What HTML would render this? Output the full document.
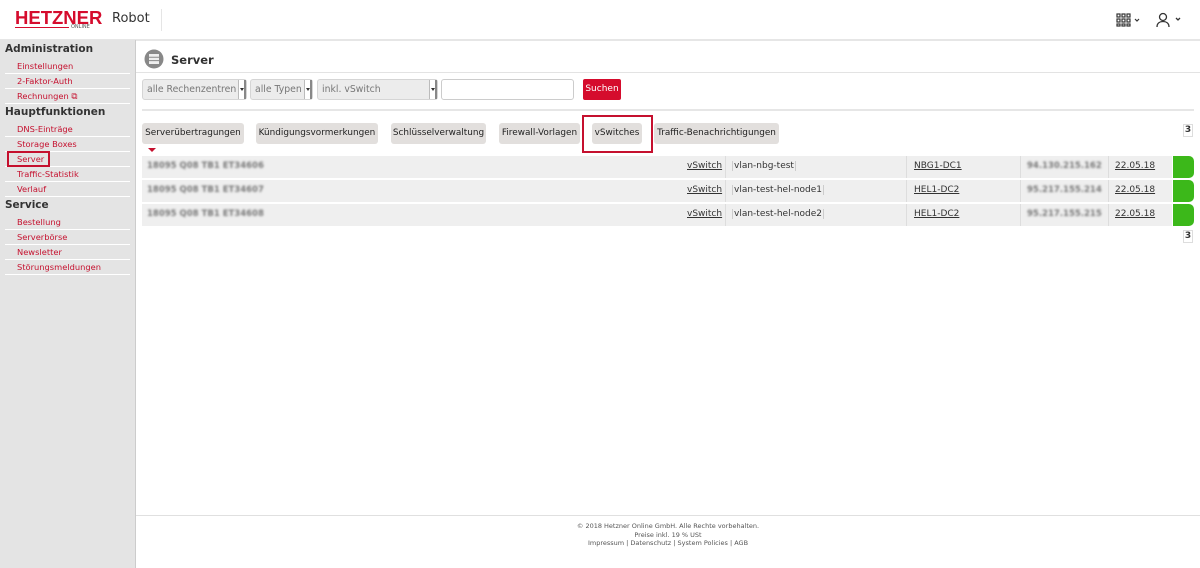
<!DOCTYPE html>
<html><head><meta charset="utf-8"><style>
*{margin:0;padding:0;box-sizing:border-box}
body{width:1200px;height:568px;position:relative;font-family:"DejaVu Sans","Liberation Sans",sans-serif;background:#fff;overflow:hidden;color:#333}
.a{position:absolute;white-space:nowrap}
.side{position:absolute;left:0;top:40px;width:136px;height:528px;background:#e4e4e4;border-right:1px solid #ccc}
.h{position:absolute;left:5px;font-size:10.5px;font-weight:bold;color:#333}
.l{position:absolute;left:5px;width:125px;font-size:8.3px;color:#c5102e;padding-left:12px;border-bottom:1px solid #fff;height:15px;line-height:15px}
.sel{position:absolute;top:79px;height:21px;background:#ececec;border:1px solid #d5d5d5;border-radius:3px;font-size:9.3px;color:#777;padding:5px 4px;line-height:10px;white-space:nowrap}
.sel b{position:absolute;right:0;top:0;width:8px;height:19px;background:#fff;border-left:1px solid #bbb;border-right:2px solid #888}
.sel b:after{content:"";position:absolute;left:1px;top:8px;border-left:2px solid transparent;border-right:2px solid transparent;border-top:3px solid #333}
.btn{position:absolute;top:123px;height:21px;background:#e2dfdd;border-radius:3px;font-size:8.9px;color:#222;line-height:21px;white-space:nowrap;text-align:center}
.row{position:absolute;left:142px;width:1030px;height:22px;background:#efefef;font-size:9px}
.row span{position:absolute;top:5px;white-space:nowrap}
.u{text-decoration:underline}
.bl{color:transparent;text-shadow:0 0 2px #777;font-size:8.5px;font-weight:bold}
.g{position:absolute;left:1173px;width:21px;height:22px;background:#3cb81a;border-radius:0 5px 5px 0}
.sep{position:absolute;top:0;width:1px;height:22px;background:#ddd}
</style></head><body>
<div class="a" style="left:15px;top:7px;font-size:18.5px;font-weight:bold;color:#d50c2d;font-family:'Liberation Sans',sans-serif">HETZNER</div>
<div class="a" style="left:70px;top:24px;font-size:5px;color:#555;background:#fff;padding:0 1px">ONLINE</div>
<div class="a" style="left:15px;top:27px;width:54px;height:1px;background:#d50c2d"></div>
<div class="a" style="left:112px;top:11px;font-size:13px;color:#333">Robot</div>
<div class="a" style="left:161px;top:9px;width:1px;height:22px;background:#e5e5e5"></div>
<svg class="a" style="left:1116px;top:13px" width="28" height="14"><g fill="none" stroke="#333" stroke-width="1.2"><rect x="1" y="1" width="3" height="3"/><rect x="6" y="1" width="3" height="3"/><rect x="11" y="1" width="3" height="3"/><rect x="1" y="6" width="3" height="3"/><rect x="6" y="6" width="3" height="3"/><rect x="11" y="6" width="3" height="3"/><rect x="1" y="11" width="3" height="2"/><rect x="6" y="11" width="3" height="2"/><rect x="11" y="11" width="3" height="2"/><path d="M19 6l2 2 2-2"/></g></svg>
<svg class="a" style="left:1155px;top:12px" width="30" height="16"><g fill="none" stroke="#333" stroke-width="1.3"><circle cx="8" cy="5" r="3.5"/><path d="M2 15c0-4 3-5.5 6-5.5s6 1.5 6 5.5"/><path d="M21 6l2 2 2-2"/></g></svg>
<div class="a" style="left:0;top:39px;width:1200px;height:2px;background:#e6e6e6"></div>
<div class="side">
<div class="h" style="top:3px">Administration</div>
<div class="l" style="top:19px">Einstellungen</div>
<div class="l" style="top:34px">2-Faktor-Auth</div>
<div class="l" style="top:49px">Rechnungen ⧉</div>
<div class="h" style="top:66px">Hauptfunktionen</div>
<div class="l" style="top:82px">DNS-Einträge</div>
<div class="l" style="top:97px">Storage Boxes</div>
<div class="l" style="top:112px">Server</div>
<div class="l" style="top:127px">Traffic-Statistik</div>
<div class="l" style="top:142px">Verlauf</div>
<div class="h" style="top:159px">Service</div>
<div class="l" style="top:175px">Bestellung</div>
<div class="l" style="top:190px">Serverbörse</div>
<div class="l" style="top:205px">Newsletter</div>
<div class="l" style="top:220px">Störungsmeldungen</div>
<div class="a" style="left:7px;top:111px;width:43px;height:16px;border:2px solid #c5102e"></div>
</div>
<svg class="a" style="left:144px;top:49px" width="20" height="20"><circle cx="10" cy="10" r="9.5" fill="#888"/><rect x="5" y="5" width="10" height="10" fill="#eee"/><path d="M5 8.3h10M5 11.6h10" stroke="#888"/></svg>
<div class="a" style="left:171px;top:53px;font-size:11.5px;font-weight:bold;color:#333">Server</div>
<div class="a" style="left:136px;top:72px;width:1064px;height:1px;background:#e3e3e3"></div>
<div class="sel" style="left:142px;width:105px">alle Rechenzentren<b></b></div>
<div class="sel" style="left:250px;width:63px">alle Typen<b></b></div>
<div class="sel" style="left:317px;width:121px">inkl. vSwitch<b></b></div>
<div class="a" style="left:441px;top:79px;width:133px;height:21px;border:1px solid #ccc;border-radius:3px"></div>
<div class="a" style="left:583px;top:79px;width:38px;height:21px;background:#d50c2d;border-radius:2px;color:#fff;font-size:9px;line-height:21px;text-align:center">Suchen</div>
<div class="a" style="left:142px;top:109px;width:1052px;height:2px;background:#e6e6e6"></div>
<div class="btn" style="left:142px;width:102px">Serverübertragungen</div>
<div class="btn" style="left:256px;width:122px">Kündigungsvormerkungen</div>
<div class="btn" style="left:391px;width:95px">Schlüsselverwaltung</div>
<div class="btn" style="left:499px;width:81px">Firewall-Vorlagen</div>
<div class="btn" style="left:592px;width:50px">vSwitches</div>
<div class="btn" style="left:654px;width:125px">Traffic-Benachrichtigungen</div>
<div class="a" style="left:582px;top:115px;width:71px;height:38px;border:2px solid #c5102e"></div>
<div class="a" style="left:1183px;top:124px;width:10px;height:13px;border:1px solid #ddd;font-size:9px;font-weight:bold;text-align:center;line-height:11px">3</div>
<div class="a" style="left:148px;top:148px;width:0;height:0;border-left:4px solid transparent;border-right:4px solid transparent;border-top:4px solid #c5102e"></div>
<div class="row" style="top:156px"><span class="bl" style="left:5px">18095 Q08 TB1 ET34606</span><span class="u" style="left:545px">vSwitch</span><div class="sep" style="left:583px"></div><span style="left:590px;border:1px solid #ccc;border-top:0;border-bottom:0;padding:0 1px">vlan-nbg-test</span><div class="sep" style="left:764px"></div><span class="u" style="left:772px">NBG1-DC1</span><div class="sep" style="left:878px"></div><span class="bl" style="left:885px">94.130.215.162</span><div class="sep" style="left:966px"></div><span class="u" style="left:973px">22.05.18</span></div>
<div class="g" style="top:156px"></div>
<div class="row" style="top:180px"><span class="bl" style="left:5px">18095 Q08 TB1 ET34607</span><span class="u" style="left:545px">vSwitch</span><div class="sep" style="left:583px"></div><span style="left:590px;border:1px solid #ccc;border-top:0;border-bottom:0;padding:0 1px">vlan-test-hel-node1</span><div class="sep" style="left:764px"></div><span class="u" style="left:772px">HEL1-DC2</span><div class="sep" style="left:878px"></div><span class="bl" style="left:885px">95.217.155.214</span><div class="sep" style="left:966px"></div><span class="u" style="left:973px">22.05.18</span></div>
<div class="g" style="top:180px"></div>
<div class="row" style="top:204px"><span class="bl" style="left:5px">18095 Q08 TB1 ET34608</span><span class="u" style="left:545px">vSwitch</span><div class="sep" style="left:583px"></div><span style="left:590px;border:1px solid #ccc;border-top:0;border-bottom:0;padding:0 1px">vlan-test-hel-node2</span><div class="sep" style="left:764px"></div><span class="u" style="left:772px">HEL1-DC2</span><div class="sep" style="left:878px"></div><span class="bl" style="left:885px">95.217.155.215</span><div class="sep" style="left:966px"></div><span class="u" style="left:973px">22.05.18</span></div>
<div class="g" style="top:204px"></div>
<div class="a" style="left:1183px;top:230px;width:10px;height:13px;border:1px solid #ddd;font-size:9px;font-weight:bold;text-align:center;line-height:11px">3</div>
<div class="a" style="left:136px;top:515px;width:1064px;height:1px;background:#e0e0e0"></div>
<div class="a" style="left:136px;top:522px;width:1064px;text-align:center;font-size:6.5px;line-height:8.5px;color:#555">© 2018 Hetzner Online GmbH. Alle Rechte vorbehalten.<br>Preise inkl. 19 % USt<br>Impressum | Datenschutz | System Policies | AGB</div>
</body></html>
